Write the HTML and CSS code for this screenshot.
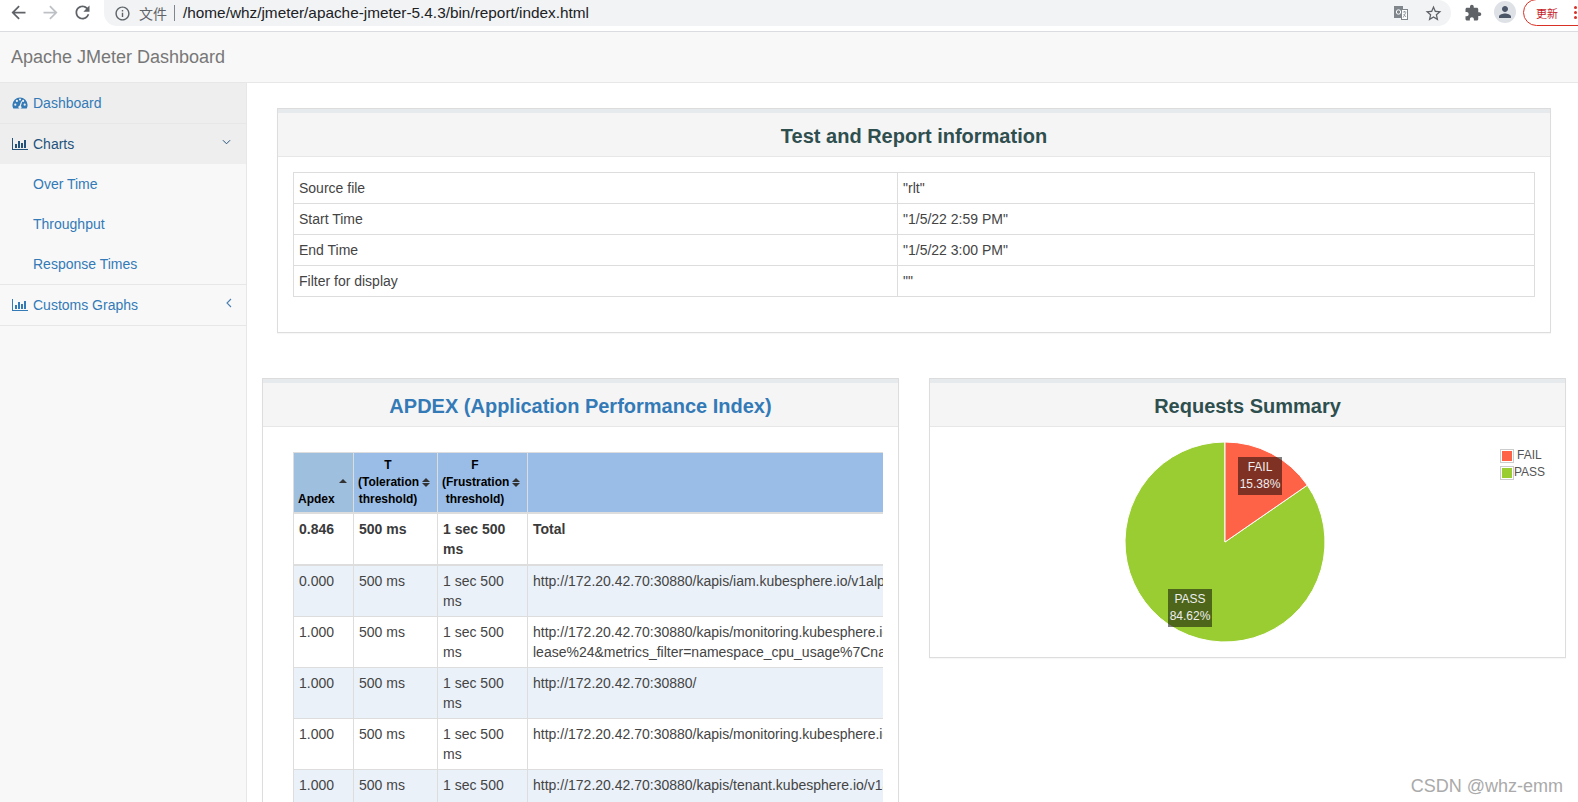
FILE: index.html
```html
<!DOCTYPE html>
<html lang="en">
<head>
<meta charset="utf-8">
<title>Apache JMeter Dashboard</title>
<link rel="stylesheet" href="styles.css">
</head>
<body>
<header class="toolbar">
  <div class="nav-btns">
    <svg class="tb-icon" viewBox="0 0 24 24"><path class="ic-dark" d="M20 11H7.83l5.59-5.59L12 4l-8 8 8 8 1.41-1.41L7.83 13H20v-2z"/></svg>
    <svg class="tb-icon" viewBox="0 0 24 24"><path class="ic-off" d="M12 4l-1.41 1.41L16.17 11H4v2h12.17l-5.58 5.59L12 20l8-8z"/></svg>
    <svg class="tb-icon" viewBox="0 0 24 24"><path class="ic-dark" d="M17.65 6.35C16.2 4.9 14.21 4 12 4c-4.42 0-7.99 3.58-7.99 8s3.57 8 7.99 8c3.73 0 6.84-2.55 7.73-6h-2.08c-.82 2.33-3.04 4-5.65 4-3.31 0-6-2.69-6-6s2.69-6 6-6c1.66 0 3.14.69 4.22 1.78L13 11h7V4l-2.35 2.35z"/></svg>
  </div>
  <div class="omnibox">
    <svg class="info-icon" viewBox="0 0 24 24"><path class="ic-dark" d="M11 7h2v2h-2zm0 4h2v6h-2zm1-9C6.48 2 2 6.48 2 12s4.48 10 10 10 10-4.48 10-10S17.52 2 12 2zm0 18c-4.41 0-8-3.59-8-8s3.59-8 8-8 8 3.59 8 8-3.59 8-8 8z"/></svg>
    <span class="scheme">文件</span>
    <span class="omni-sep"></span>
    <span class="url">/home/whz/jmeter/apache-jmeter-5.4.3/bin/report/index.html</span>
    <svg class="translate-icon" viewBox="0 0 14 14">
      <rect class="tr-back" x="0" y="0" width="9" height="12"/>
      <circle class="tr-g" cx="4.5" cy="6" r="2.2"/>
      <rect class="tr-front" x="7.5" y="3.5" width="6" height="10"/>
      <path class="tr-mark" d="M8.8 6h3.4M10.5 5v1M9.2 11.5l2.6-5M9.5 8l2.5 3"/>
    </svg>
    <svg class="star-icon" viewBox="0 0 24 24"><path class="ic-dark" d="M22 9.24l-7.19-.62L12 2 9.19 8.63 2 9.24l5.46 4.73L5.82 21 12 17.27 18.18 21l-1.63-7.03L22 9.24zM12 15.4l-3.76 2.27 1-4.28-3.32-2.88 4.38-.38L12 6.1l1.71 4.04 4.38.38-3.32 2.88 1 4.28L12 15.4z"/></svg>
  </div>
  <svg class="puzzle-icon" viewBox="0 0 24 24"><path class="ic-dark" d="M20.5 11H19V7c0-1.1-.9-2-2-2h-4V3.5C13 2.12 11.88 1 10.5 1S8 2.12 8 3.5V5H4c-1.1 0-1.99.9-1.99 2v3.8H3.5c1.49 0 2.7 1.21 2.7 2.7s-1.21 2.7-2.7 2.7H2V20c0 1.1.9 2 2 2h3.8v-1.5c0-1.49 1.21-2.7 2.7-2.7 1.49 0 2.7 1.21 2.7 2.7V22H17c1.1 0 2-.9 2-2v-4h1.5c1.38 0 2.5-1.12 2.5-2.5S21.88 11 20.5 11z"/></svg>
  <div class="avatar"><svg viewBox="0 0 24 24"><path class="ic-avatar" d="M12 12c2.21 0 4-1.79 4-4s-1.79-4-4-4-4 1.79-4 4 1.79 4 4 4zm0 2c-2.67 0-8 1.34-8 4v2h16v-2c0-2.66-5.33-4-8-4z"/></svg></div>
  <div class="update-btn"><span class="update-text">更新</span><span class="dots"><i></i><i></i><i></i></span></div>
</header>

<nav class="navbar"><span class="brand">Apache JMeter Dashboard</span></nav>

<div class="main">
  <aside class="sidebar">
    <a class="side-item active">
      <svg class="side-icon" viewBox="0 0 16 12"><path class="ic-link" fill-rule="evenodd" d="M8 .5A7.6 7.6 0 0 0 .4 8.1c0 1.3.3 2.4.9 3.4h13.4c.6-1 .9-2.1.9-3.4A7.6 7.6 0 0 0 8 .5zM3.3 8.8a1.1 1.1 0 1 1 0-2.2 1.1 1.1 0 0 1 0 2.2zM4.9 5a1.1 1.1 0 1 1 0-2.2 1.1 1.1 0 0 1 0 2.2zM8 3.6a1.1 1.1 0 1 1 0-2.2 1.1 1.1 0 0 1 0 2.2zm1.7 6.8a1.9 1.9 0 0 1-3.4 0c0-.8.6-1.5 1.3-1.7l1.6-4.4 1 .3-1.3 4.3c.5.3.8.9.8 1.5zM11.1 5a1.1 1.1 0 1 1 0-2.2 1.1 1.1 0 0 1 0 2.2zm1.6 3.8a1.1 1.1 0 1 1 0-2.2 1.1 1.1 0 0 1 0 2.2z"/></svg>
      <span>Dashboard</span>
    </a>
    <a class="side-item open">
      <svg class="side-icon" viewBox="0 0 16 12"><path class="ic-dark-link" d="M0 0h1v11h15v1H0zM3 6h2v4H3zM6 3h2v7H6zM9 5h2v5H9zM12 2h2v8h-2z"/></svg>
      <span class="side-label">Charts</span>
      <svg class="chev" viewBox="0 0 10 6"><path class="chev-line chev-dark" d="M1 1l4 4 4-4"/></svg>
    </a>
    <ul class="sub">
      <li class="sub-item">Over Time</li>
      <li class="sub-item">Throughput</li>
      <li class="sub-item">Response Times</li>
    </ul>
    <a class="side-item">
      <svg class="side-icon" viewBox="0 0 16 12"><path class="ic-link" d="M0 0h1v11h15v1H0zM3 6h2v4H3zM6 3h2v7H6zM9 5h2v5H9zM12 2h2v8h-2z"/></svg>
      <span class="side-label">Customs Graphs</span>
      <svg class="chev chev-left" viewBox="0 0 6 10"><path class="chev-line" d="M5 1L1 5l4 4"/></svg>
    </a>
  </aside>

  <main class="content">
    <section class="panel panel-info">
      <h2 class="panel-head">Test and Report information</h2>
      <div class="panel-body info-body">
        <table class="info-table">
          <tr><td class="info-key">Source file</td><td>"rlt"</td></tr>
          <tr><td class="info-key">Start Time</td><td>"1/5/22 2:59 PM"</td></tr>
          <tr><td class="info-key">End Time</td><td>"1/5/22 3:00 PM"</td></tr>
          <tr><td class="info-key">Filter for display</td><td>""</td></tr>
        </table>
      </div>
    </section>

    <div class="row">
      <section class="panel panel-apdex">
        <h2 class="panel-head head-link">APDEX (Application Performance Index)</h2>
        <div class="apdex-body">
          <div class="table-clip">
            <table class="apdex-table">
              <colgroup><col class="c1"><col class="c2"><col class="c3"><col class="c4"></colgroup>
              <thead>
                <tr>
                  <th class="th-sorted">Apdex<span class="sort sort-up"></span></th>
                  <th class="th-center">T<br>(Toleration<br>threshold)<span class="sort sort-both"></span></th>
                  <th class="th-center">F<br>(Frustration<br>threshold)<span class="sort sort-both"></span></th>
                  <th></th>
                </tr>
              </thead>
              <tbody>
                <tr class="total"><td>0.846</td><td>500 ms</td><td>1 sec 500 ms</td><td>Total</td></tr>
                <tr class="odd"><td>0.000</td><td>500 ms</td><td>1 sec 500 ms</td><td>http://172.20.42.70:30880/kapis/iam.kubesphere.io/v1alpha2/users</td></tr>
                <tr><td>1.000</td><td>500 ms</td><td>1 sec 500 ms</td><td>http://172.20.42.70:30880/kapis/monitoring.kubesphere.io/v1alpha3/namespaces/default/workloads/deployment/re<br>lease%24&amp;metrics_filter=namespace_cpu_usage%7Cnamespace_memory_usage</td></tr>
                <tr class="odd"><td>1.000</td><td>500 ms</td><td>1 sec 500 ms</td><td>http://172.20.42.70:30880/</td></tr>
                <tr><td>1.000</td><td>500 ms</td><td>1 sec 500 ms</td><td>http://172.20.42.70:30880/kapis/monitoring.kubesphere.io/v1alpha3/cluster</td></tr>
                <tr class="odd"><td>1.000</td><td>500 ms</td><td>1 sec 500 ms</td><td>http://172.20.42.70:30880/kapis/tenant.kubesphere.io/v1alpha2/workspaces</td></tr>
              </tbody>
            </table>
          </div>
        </div>
      </section>

      <section class="panel panel-summary">
        <h2 class="panel-head">Requests Summary</h2>
        <div class="pie-body">
          <svg class="pie" viewBox="0 0 200 200">
            <path class="slice-pass" d="M100 100V0A100 100 0 1 0 182.3 43.2z"/>
            <path class="slice-fail" d="M100 100V0A100 100 0 0 1 182.3 43.2z"/>
          </svg>
          <div class="pie-label label-fail">FAIL<br>15.38%</div>
          <div class="pie-label label-pass">PASS<br>84.62%</div>
          <div class="legend">
            <div class="legend-row"><span class="swatch"><i class="sw-fail"></i></span><span class="legend-fail">FAIL</span></div>
            <div class="legend-row"><span class="swatch"><i class="sw-pass"></i></span><span>PASS</span></div>
          </div>
        </div>
      </section>
    </div>
  </main>
</div>
<div class="watermark">CSDN @whz-emm</div>
</body>
</html>
```
FILE: styles.css
```css
* { box-sizing: border-box; }
html, body { margin: 0; height: 802px; overflow: hidden; }
body {
  font-family: "Liberation Sans", Arial, sans-serif;
  font-size: 14px;
  line-height: 20px;
  color: #333;
  background: #fff;
  position: relative;
}

/* browser chrome */
.toolbar {
  height: 32px;
  display: flex;
  align-items: flex-start;
  border-bottom: 1px solid #dadce0;
  background: #fff;
  overflow: hidden;
}
.nav-btns { display: flex; flex: none; width: 104px; padding-left: 8px; gap: 11px; height: 24px; align-items: center; }
.tb-icon { width: 21px; height: 21px; flex: none; }
.ic-dark { fill: #5f6368; }
.ic-off { fill: #bdc1c6; }
.ic-avatar { fill: #4a5568; }
.omnibox {
  flex: none;
  width: 1347px;
  height: 26px;
  background: #f1f3f4;
  border-radius: 0 13px 13px 13px;
  display: flex;
  align-items: center;
  padding-left: 10px;
}
.info-icon { width: 17px; height: 17px; flex: none; }
.scheme { margin-left: 8px; font-family: "Noto Sans CJK SC", sans-serif; font-size: 14px; color: #5f6368; }
.omni-sep { width: 1px; height: 16px; background: #80868b; margin: 0 8px 0 7px; }
.url { color: #202124; font-size: 15.35px; line-height: 22px; flex: 1; white-space: nowrap; }
.translate-icon { width: 14px; height: 14px; flex: none; margin-right: 16px; }
.tr-back { fill: #80868b; }
.tr-g { fill: none; stroke: #fff; stroke-width: 1; }
.tr-front { fill: #fff; stroke: #80868b; stroke-width: 1; }
.tr-mark { fill: none; stroke: #80868b; stroke-width: .8; }
.star-icon { width: 19px; height: 19px; flex: none; margin-right: 8px; }
.puzzle-icon { width: 18px; height: 18px; flex: none; margin: 4px 0 0 13px; }
.avatar {
  width: 22px; height: 22px; border-radius: 50%; background: #dee1e6;
  margin: 1px 0 0 12px; flex: none; display: flex; align-items: center; justify-content: center;
}
.avatar svg { width: 18px; height: 18px; }
.update-btn {
  flex: none;
  width: 70px; height: 27px;
  margin: -1px 0 0 7px;
  border: 1px solid #d93025;
  border-radius: 14px;
  display: flex;
  align-items: center;
  padding-left: 12px;
}
.update-text { flex: none; font-family: "Noto Sans CJK SC", sans-serif; font-size: 11px; color: #c5221f; width: 38px; }
.dots { display: flex; flex-direction: column; gap: 2px; }
.dots i { width: 3px; height: 3px; border-radius: 50%; background: #d93025; display: block; }

/* app navbar */
.navbar {
  height: 51px;
  background: #f8f8f8;
  border-bottom: 1px solid #e7e7e7;
  padding: 15px 11px 0;
}
.brand { font-size: 18px; line-height: 20px; color: #777; display: block; }

.main { display: flex; height: 719px; overflow: hidden; }

/* sidebar */
.sidebar {
  width: 247px;
  flex: none;
  background: #f8f8f8;
  border-right: 1px solid #e7e7e7;
}
.side-item {
  display: flex;
  align-items: center;
  height: 41px;
  padding: 0 13px 0 12px;
  color: #337ab7;
  border-bottom: 1px solid #e7e7e7;
}
.side-item.active { background: #eee; }
.side-item.open { background: #eee; color: #23527c; border-bottom: 0; height: 40px; }
.side-icon { width: 16px; height: 12px; flex: none; margin-right: 5px; }
.ic-link { fill: #337ab7; }
.ic-dark-link { fill: #23527c; }
.side-label { flex: 1; }
.chev { width: 9px; height: 6px; margin: -5px 2px 0 0; flex: none; }
.chev-left { width: 6px; height: 10px; margin: -5px 1px 0 0; }
.chev-line { fill: none; stroke: #4a7fb0; stroke-width: 1.1; }
.chev-dark { stroke: #23527c; }
.sub { list-style: none; margin: 0; padding: 0; border-bottom: 1px solid #e7e7e7; }
.sub-item { height: 40px; padding: 10px 0 0 33px; color: #337ab7; }

/* content */
.content { flex: 1; min-width: 0; padding-top: 25px; }
.panel {
  background: #fff;
  border: 1px solid #ddd;
  border-top-color: #dcdcdc;
  box-shadow: 0 1px 1px rgba(0,0,0,.03);
}
.panel-head {
  margin: 0;
  height: 48px;
  padding-top: 9px;
  border-top: 4px solid #e7eaec;
  border-bottom: 1px solid #e7e7e7;
  background: #f5f5f5;
  font-size: 20px;
  line-height: 28px;
  font-weight: 700;
  text-align: center;
  color: #2f4f4f;
}
.head-link { color: #337ab7; }
.panel-info { margin: 0 27px 45px 30px; height: 225px; }
.info-body { padding: 15px; }
.info-table { width: 100%; border-collapse: collapse; table-layout: fixed; color: #444; }
.info-table td { border: 1px solid #ddd; padding: 5px; height: 31px; }
.info-key { width: 604px; }

.row { display: flex; align-items: flex-start; gap: 30px; margin: 0 12px 0 15px; }
.panel-apdex { width: 637px; height: 500px; flex: none; }
.apdex-body { padding: 25px 15px 0 30px; }
.table-clip { overflow: hidden; }
.apdex-table { border-collapse: collapse; table-layout: fixed; width: 1400px; color: #444; }
.c1 { width: 60px; }
.c2 { width: 84px; }
.c3 { width: 90px; }
.apdex-table th {
  background: #99bde6;
  border: 1px solid #ddd;
  border-bottom-width: 2px;
  padding: 4px 4px;
  font-size: 12px;
  line-height: 17px;
  color: #000;
  text-align: left;
  vertical-align: bottom;
  position: relative;
}
.apdex-table .th-sorted { background: #9fbfdf; }
.apdex-table .th-center { text-align: center; padding-right: 19px; }
.apdex-table td { border: 1px solid #ddd; padding: 5px; vertical-align: top; height: 51px; }
.apdex-table .total td { font-weight: 700; color: #3a3a3a; border-bottom-width: 2px; }
.odd td { background: #eaf1f9; }

.sort { position: absolute; right: 7px; top: 25px; width: 8px; height: 9px; }
.sort::before, .sort::after { content: ""; position: absolute; left: 0; border-left: 4px solid transparent; border-right: 4px solid transparent; }
.sort-both::before, .sort-up::before { top: 0; border-bottom: 4px solid #333; }
.sort-both::after { bottom: 0; border-top: 4px solid #333; }
.sort-up { right: 6px; top: 26px; }
.sort-up::after { display: none; }

.panel-summary { flex: 1; min-width: 0; height: 280px; }
.pie-body { position: relative; height: 230px; padding: 15px 0 0 195px; }
.pie { display: block; width: 200px; height: 200px; overflow: visible; }
.slice-pass { fill: #9acd32; stroke: #fff; stroke-width: 1; }
.slice-fail { fill: #ff6347; stroke: #fff; stroke-width: 1; }
.pie-label {
  position: absolute;
  width: 44px;
  height: 38px;
  padding-top: 2px;
  background: rgba(0,0,0,.5);
  color: #eee;
  font-size: 12px;
  line-height: 17px;
  text-align: center;
}
.label-fail { left: 308px; top: 30px; }
.label-pass { left: 238px; top: 162px; }
.legend { position: absolute; left: 570px; top: 20px; font-size: 12px; line-height: 17px; color: #545454; }
.legend-row { display: flex; align-items: center; height: 17px; }
.swatch { width: 14px; height: 14px; border: 1px solid #ccc; padding: 1px; display: block; }
.swatch i { display: block; width: 10px; height: 10px; }
.sw-fail { background: #ff6347; }
.sw-pass { background: #9acd32; }
.legend-fail { margin-left: 3px; }

.watermark {
  position: absolute;
  right: 15px;
  bottom: 5px;
  font-size: 18px;
  line-height: 22px;
  color: #aaa;
  text-shadow: 0 0 2px #fff;
}
```
